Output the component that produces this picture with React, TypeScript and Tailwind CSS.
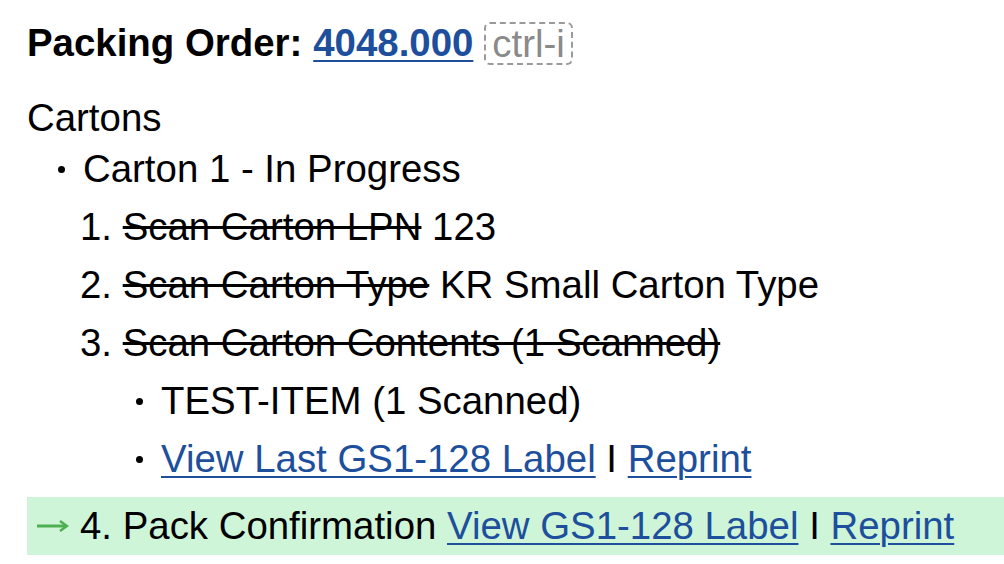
import React from "react";

const linkCls = "text-[#1d4f9c] underline decoration-2 underline-offset-[4px]";

function Bullet({ children, indent }: { children: React.ReactNode; indent: string }) {
  return (
    <div className={`flex h-[58px] items-center leading-[58px] ${indent}`}>
      <span className="flex w-[26px] items-center">
        <span className="ml-[1px] inline-block h-[7px] w-[7px] rounded-full bg-black" />
      </span>
      <span>{children}</span>
    </div>
  );
}

function Step({ n, children }: { n: number; children: React.ReactNode }) {
  return (
    <div className="h-[58px] pl-[53px] leading-[58px]">
      {n}. {children}
    </div>
  );
}

export default function App() {
  return (
    <div className="min-h-screen bg-white pl-[27px] pt-[21px] font-['Liberation_Sans',Arial,sans-serif] text-[38.4px] text-black">
      <h1 className="flex h-[44px] items-center font-bold leading-[44px]">
        <span>Packing Order:</span>
        <a href="#" className={`ml-[11px] ${linkCls}`}>
          4048.000
        </a>
        <span className="ml-[11px] rounded-[6px] border-2 border-dashed border-[#9a9a9a] px-[6px] font-normal leading-[39px] text-[#8a8a8a]">
          ctrl-i
        </span>
      </h1>

      <div className="mt-[31px] h-[44px] leading-[44px]">Cartons</div>

      <Bullet indent="pl-[30px]">Carton 1 - In Progress</Bullet>
      <Step n={1}>
        <span className="line-through">Scan Carton LPN</span> 123
      </Step>
      <Step n={2}>
        <span className="line-through">Scan Carton Type</span> KR Small Carton Type
      </Step>
      <Step n={3}>
        <span className="line-through">Scan Carton Contents (1 Scanned)</span>
      </Step>
      <Bullet indent="pl-[108px]">TEST-ITEM (1 Scanned)</Bullet>
      <Bullet indent="pl-[108px]">
        <a href="#" className={linkCls}>
          View Last GS1-128 Label
        </a>{" "}
        I{" "}
        <a href="#" className={linkCls}>
          Reprint
        </a>
      </Bullet>

      <div className="mt-[9px] flex h-[58px] items-center bg-[#cff5d8] leading-[58px]">
        <svg width="32" height="14" viewBox="0 0 32 14" className="ml-[10px] mr-[11px]">
          <line x1="0" y1="7" x2="29" y2="7" stroke="#4caf50" strokeWidth="3" />
          <path d="M23 2 L30 7 L23 12" fill="none" stroke="#4caf50" strokeWidth="2.5" />
        </svg>
        <span>
          4. Pack Confirmation{" "}
          <a href="#" className={linkCls}>
            View GS1-128 Label
          </a>{" "}
          I{" "}
          <a href="#" className={linkCls}>
            Reprint
          </a>
        </span>
      </div>
    </div>
  );
}
